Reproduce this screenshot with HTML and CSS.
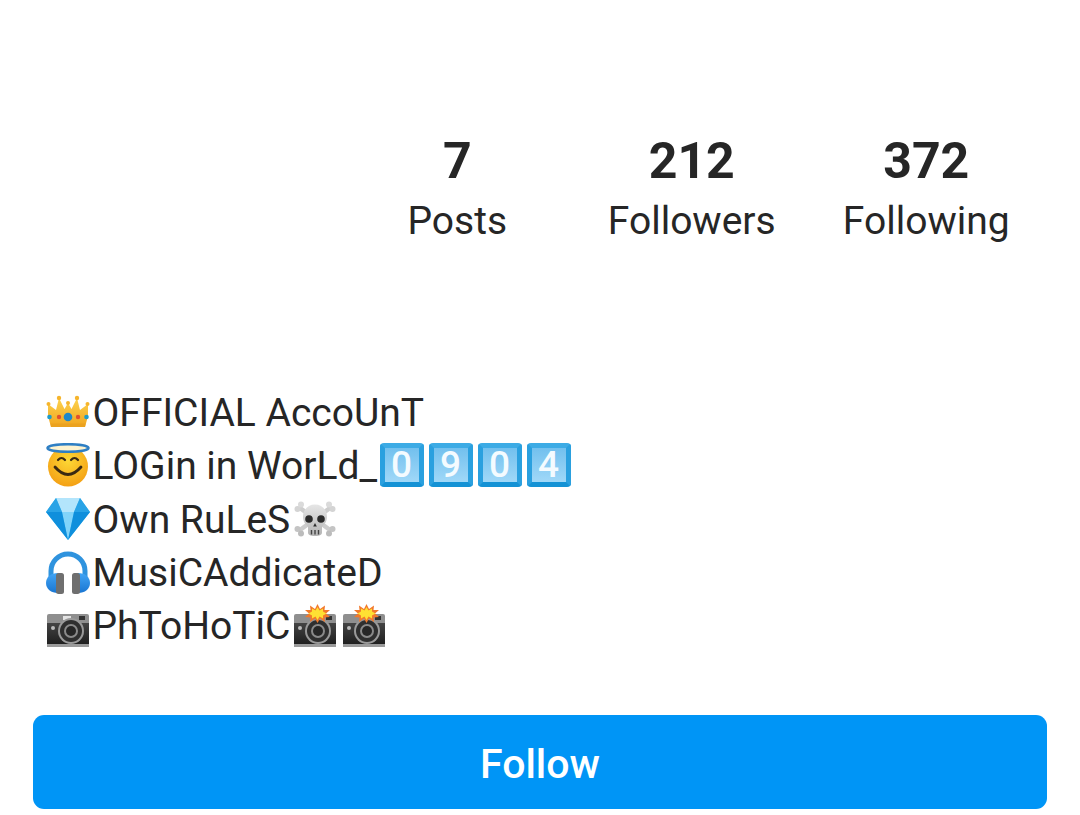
FILE: index.html
```html
<!DOCTYPE html>
<html lang="en">
<head>
<meta charset="utf-8">
<title>Profile</title>
<link rel="stylesheet" href="styles.css">
</head>
<body>
<svg class="defs" aria-hidden="true">
  <defs>
    <linearGradient id="gold" x1="0" y1="0" x2="0" y2="1"><stop offset="0" stop-color="#fdd34f"/><stop offset="1" stop-color="#f0a51f"/></linearGradient>
    <radialGradient id="face" cx=".5" cy=".35" r=".7"><stop offset="0" stop-color="#fdd835"/><stop offset="1" stop-color="#f39c12"/></radialGradient>
    <linearGradient id="bone" x1="0" y1="0" x2="0" y2="1"><stop offset="0" stop-color="#e6e6e6"/><stop offset="1" stop-color="#b4b4b4"/></linearGradient>
    <linearGradient id="body" x1="0" y1="0" x2="0" y2="1"><stop offset="0" stop-color="#444"/><stop offset="1" stop-color="#1e1e1e"/></linearGradient>
    <linearGradient id="cup" x1="0" y1="0" x2="0" y2="1"><stop offset="0" stop-color="#42a5f5"/><stop offset="1" stop-color="#1976d2"/></linearGradient>

    <symbol id="crown" viewBox="0 0 44 44">
      <path d="M5 37 2 26 2 14l8 6 3-12 5.500 11 3.500-6 3.500 6L31 8l3 12 8-6v12l-3 11z" fill="url(#gold)"/>
      <circle cx="2.500" cy="14" r="2" fill="#f6b52c"/><circle cx="13" cy="8" r="2.200" fill="#f6b52c"/>
      <circle cx="22" cy="13" r="2" fill="#f6b52c"/><circle cx="31" cy="8" r="2.200" fill="#f6b52c"/>
      <circle cx="41.500" cy="14" r="2" fill="#f6b52c"/>
      <circle cx="22" cy="27" r="4.300" fill="#1e88c9"/><circle cx="13" cy="27" r="2.200" fill="#e2502e"/>
      <circle cx="32" cy="27" r="2.200" fill="#e2502e"/><circle cx="3.500" cy="27" r="2.300" fill="#1e9bc9"/>
      <circle cx="40.500" cy="27" r="2.300" fill="#1e9bc9"/>
      <path d="M4.500 33.500h35l-.5 3.500H5z" fill="#eba21f"/>
    </symbol>

    <symbol id="halo" viewBox="0 0 44 44">
      <circle cx="22" cy="23.500" r="20" fill="url(#face)"/>
      <path d="M12 17q3.500-4 7 0M25 17q3.500-4 7 0" fill="none" stroke="#3b2a12" stroke-width="2.200" stroke-linecap="round"/>
      <path d="M9 24q13 15 26 0" fill="none" stroke="#3b2a12" stroke-width="2.800" stroke-linecap="round"/>
      <ellipse cx="22" cy="5" rx="20.500" ry="3.800" fill="#fdf3d0" stroke="#2f7fc4" stroke-width="2.500"/>
    </symbol>

    <symbol id="gem" viewBox="0 0 44 44">
      <path d="M10 1h24l10 14-22 28L0 15z" fill="#4fc3f7"/>
      <path d="M10 1h24l-6 14H16z" fill="#b3e5fc"/>
      <path d="M10 1 0 15h16zM34 1l10 14H28z" fill="#29a3e6"/>
      <path d="M16 15h12l-6 28z" fill="#81d4fa"/>
      <path d="M0 15h16l6 28zM44 15H28l-6 28z" fill="#0f8fdc"/>
    </symbol>

    <symbol id="skull" viewBox="0 0 44 44">
      <path d="M7 11 37 33M37 11 7 33" stroke="#cdcdcd" stroke-width="4.500" stroke-linecap="round" fill="none"/>
      <circle cx="4.500" cy="12" r="3" fill="#d4d4d4"/><circle cx="8" cy="7.500" r="3" fill="#dadada"/>
      <circle cx="39.500" cy="12" r="3" fill="#d4d4d4"/><circle cx="36" cy="7.500" r="3" fill="#dadada"/>
      <circle cx="4.500" cy="32" r="3" fill="#c4c4c4"/><circle cx="8" cy="36.500" r="3" fill="#bcbcbc"/>
      <circle cx="39.500" cy="32" r="3" fill="#c4c4c4"/><circle cx="36" cy="36.500" r="3" fill="#bcbcbc"/>
      <path d="M22 7.500c-7 0-12 5-12 12.500 0 4.500 2.500 7.500 5 9.500v6c0 2 2 3.500 7 3.500s7-1.500 7-3.500v-6c2.500-2 5-5 5-9.500 0-7.500-5-12.500-12-12.500z" fill="url(#bone)"/>
      <circle cx="16" cy="22" r="3.800" fill="#2b2b2b"/><circle cx="28" cy="22" r="3.800" fill="#2b2b2b"/>
      <path d="M22 26l1.800 3.500h-3.600z" fill="#2b2b2b"/>
      <path d="M18.500 33v4.500M22 33v4.500M25.500 33v4.500" stroke="#444" stroke-width="1.400"/>
    </symbol>

    <symbol id="phones" viewBox="0 0 44 44">
      <path d="M5 28V21a17 17 0 0 1 34 0v7" fill="none" stroke="#2f93de" stroke-width="5"/>
      <path d="M12 23C5 23 0 27 0 33s5 10 12 10z" fill="url(#cup)"/>
      <path d="M32 23c7 0 12 4 12 10s-5 10-12 10z" fill="url(#cup)"/>
      <rect x="10" y="23" width="8" height="21" rx="2.500" fill="#6f6f6f"/>
      <rect x="26" y="23" width="8" height="21" rx="2.500" fill="#6f6f6f"/>
    </symbol>

    <symbol id="camera" viewBox="0 0 44 44">
      <path d="M1 13q0-2 2-2h38q2 0 2 2v8H1z" fill="#8f8f8f"/>
      <rect x="17" y="13" width="8" height="4" fill="#e4e4e4"/>
      <rect x="33" y="13" width="6" height="4" fill="#333"/>
      <rect x="1" y="20" width="42" height="22" fill="url(#body)"/>
      <rect x="1" y="41" width="42" height="3" fill="#9b9b9b"/>
      <circle cx="25" cy="28" r="13" fill="#9a9a9a"/><circle cx="25" cy="28" r="11" fill="#2f2f2f"/>
      <circle cx="25" cy="28" r="7" fill="#8a8a8a"/><circle cx="25" cy="28" r="5" fill="#262626"/>
      <circle cx="7" cy="25" r="2" fill="#bbb"/>
    </symbol>

    <symbol id="flash" viewBox="0 0 44 44">
      <path d="M1 13q0-2 2-2h38q2 0 2 2v8H1z" fill="#8f8f8f"/>
      <rect x="33" y="13" width="6" height="4" fill="#333"/>
      <rect x="1" y="20" width="42" height="22" fill="url(#body)"/>
      <rect x="1" y="41" width="42" height="3" fill="#9b9b9b"/>
      <circle cx="25" cy="28" r="13" fill="#9a9a9a"/><circle cx="25" cy="28" r="11" fill="#2f2f2f"/>
      <circle cx="25" cy="28" r="7" fill="#8a8a8a"/><circle cx="25" cy="28" r="5" fill="#262626"/>
      <circle cx="7" cy="25" r="2" fill="#bbb"/>
      <path d="M24.500 1 27 6l5-3.500L31.500 7H37l-4 3.500 4 3.500-5.500.5.500 4.500-5-3.500-2.500 4.500-2.500-4.500-5 3.500.5-4.500L12 14l4-3.500L12 7h5.500L17 2.500 22 6z" fill="#f2792b"/>
      <path d="M24.500 4l2 3.500L30 5.500v3l3.500 2-3.500 2v3l-3.500-2-2 3.500-2-3.500-3.500 2v-3l-3.500-2 3.500-2v-3l3.500 2z" fill="#ffe033"/>
    </symbol>
  </defs>
</svg>

<main class="profile">
  <section class="stats">
    <div class="stat"><span class="num">7</span><span class="label">Posts</span></div>
    <div class="stat"><span class="num">212</span><span class="label">Followers</span></div>
    <div class="stat"><span class="num">372</span><span class="label">Following</span></div>
  </section>

  <section class="bio">
    <p class="line"><svg class="emoji"><use href="#crown"/></svg>OFFICIAL AccoUnT</p>
    <p class="line"><svg class="emoji"><use href="#halo"/></svg>LOGin in WorLd_<span class="key">0</span><span class="key">9</span><span class="key">0</span><span class="key">4</span></p>
    <p class="line"><svg class="emoji"><use href="#gem"/></svg>Own RuLeS<svg class="emoji"><use href="#skull"/></svg></p>
    <p class="line"><svg class="emoji"><use href="#phones"/></svg>MusiCAddicateD</p>
    <p class="line"><svg class="emoji"><use href="#camera"/></svg>PhToHoTiC<svg class="emoji"><use href="#flash"/></svg><svg class="emoji"><use href="#flash"/></svg></p>
  </section>

  <button class="follow" type="button">Follow</button>
</main>
</body>
</html>
```

FILE: styles.css
```css
* { box-sizing: border-box; }

html, body {
  margin: 0;
  background: #fff;
}

.defs {
  position: absolute;
  width: 0;
  height: 0;
}

.profile {
  width: 1080px;
  height: 815px;
  overflow: hidden;
  padding-top: 132px;
  font-family: Roboto, "Liberation Sans", sans-serif;
  color: #262626;
}

.stats {
  display: grid;
  grid-template-columns: repeat(3, 234.5px);
  margin-left: 340px;
}

.stat {
  display: flex;
  flex-direction: column;
  align-items: center;
}

.num {
  font-size: 50px;
  font-weight: 700;
  line-height: 58px;
}

.label {
  font-size: 39px;
  line-height: 62px;
}

.bio {
  margin-top: 135px;
  padding-left: 43.5px;
}

.line {
  margin: 0;
  height: 53.3px;
  line-height: 53.3px;
  font-size: 39px;
  white-space: nowrap;
}

.emoji {
  width: 44px;
  height: 44px;
  margin: 0 2.5px;
  vertical-align: -8px;
}

.key {
  display: inline-block;
  width: 44px;
  height: 44px;
  margin: 0 2.5px;
  overflow: hidden;
  border: 5px solid #2aa0df;
  border-top-color: #3cabe5;
  border-bottom-color: #1492d5;
  border-radius: 4px;
  background: linear-gradient(#72c0ee, #a0d8f8);
  color: #f4fbff;
  font-size: 37px;
  font-weight: 500;
  line-height: 34px;
  text-align: center;
  vertical-align: -8px;
}

.follow {
  display: block;
  width: 1014px;
  height: 94px;
  margin: 62px 0 0 33px;
  padding: 4px 0 0;
  border: 0;
  border-radius: 11px;
  background: #0095f6;
  color: #fff;
  font-family: inherit;
  font-size: 41px;
  font-weight: 500;
}
```
